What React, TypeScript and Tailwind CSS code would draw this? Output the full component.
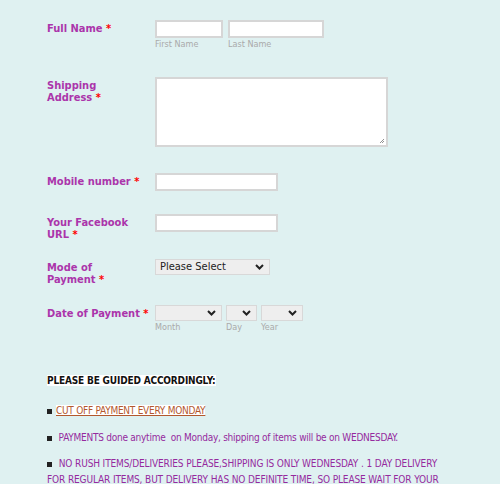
import React from "react";

const Label = ({ children }: { children: React.ReactNode }) => (
  <div className="w-[108px] shrink-0 text-[11px] font-bold leading-[12px] text-[#ab35ab]">{children}</div>
);
const Star = () => <span className="text-[#ff0000]"> *</span>;

const Chevron = () => (
  <svg width="9" height="6" viewBox="0 0 9 6" className="absolute right-[5px] top-1/2 -translate-y-1/2">
    <path d="M1 1 L4.5 4.5 L8 1" stroke="#222" strokeWidth="2" fill="none" />
  </svg>
);

const Sel = ({ w, text }: { w: string; text?: string }) => (
  <div className={`relative h-[16px] ${w} border border-[#d8d8d8] bg-[#eeeeee] pl-[4px] text-[11px] leading-[14px] text-[#222]`}>
    {text}
    <Chevron />
  </div>
);

const Sub = ({ children }: { children: React.ReactNode }) => (
  <div className="text-[9px] leading-[12px] text-[#aaaaaa]">{children}</div>
);

const Bullet = () => <span className="mr-[4px] inline-block h-[5px] w-[5px] bg-[#222] align-middle" />;

export default function App() {
  return (
    <div
      className="min-h-[484px] w-[500px] overflow-hidden bg-[#dff1f1] pl-[47px] pt-[20px]"
      style={{ fontFamily: '"DejaVu Sans Condensed", "DejaVu Sans", Verdana, sans-serif', fontStretch: "condensed" }}
    >
      {/* Full name */}
      <div className="flex">
        <Label><div className="pt-[3px]">Full Name<Star /></div></Label>
        <div className="flex gap-[5px]">
          <div>
            <div className="h-[18px] w-[68px] border-2 border-[#d6d6d6] bg-white" />
            <Sub>First Name</Sub>
          </div>
          <div>
            <div className="h-[18px] w-[96px] border-2 border-[#d6d6d6] bg-white" />
            <Sub>Last Name</Sub>
          </div>
        </div>
      </div>
      {/* Shipping */}
      <div className="mt-[27px] flex">
        <Label><div className="pt-[3px]">Shipping<br />Address<Star /></div></Label>
        <div className="relative h-[70px] w-[233px] border-2 border-[#d6d6d6] bg-white">
          <svg width="6" height="6" viewBox="0 0 6 6" className="absolute bottom-[1px] right-[1px]">
            <path d="M5 1 L1 5 M5 3 L3 5" stroke="#777" strokeWidth="0.8" />
          </svg>
        </div>
      </div>
      {/* Mobile */}
      <div className="mt-[26px] flex">
        <Label><div className="whitespace-nowrap pt-[3px]">Mobile number<Star /></div></Label>
        <div className="h-[18px] w-[123px] border-2 border-[#d6d6d6] bg-white" />
      </div>
      {/* Facebook */}
      <div className="mt-[23px] flex">
        <Label><div className="pt-[3px]">Your Facebook<br />URL<Star /></div></Label>
        <div className="h-[18px] w-[123px] border-2 border-[#d6d6d6] bg-white" />
      </div>
      {/* Mode of payment */}
      <div className="mt-[18px] flex">
        <Label><div className="pt-[3px]">Mode of<br />Payment<Star /></div></Label>
        <Sel w="w-[115px]" text="Please Select" />
      </div>
      {/* Date */}
      <div className="mt-[19px] flex">
        <Label><div className="whitespace-nowrap pt-[3px]">Date of Payment<Star /></div></Label>
        <div className="flex gap-[4px]">
          <div>
            <Sel w="w-[67px]" />
            <Sub>Month</Sub>
          </div>
          <div>
            <Sel w="w-[31px]" />
            <Sub>Day</Sub>
          </div>
          <div>
            <Sel w="w-[42px]" />
            <Sub>Year</Sub>
          </div>
        </div>
      </div>
      {/* Notes */}
      <div className="mt-[40px] w-[403px] text-[10px] leading-[15px] tracking-[-0.25px]">
        <div><span className="bg-white font-bold tracking-[-0.17px] text-[#111]">PLEASE BE GUIDED ACCORDINGLY:</span></div>
        <div className="mt-[15px] text-[#b3582e]">
          <Bullet />
          <span className="bg-white underline">CUT OFF PAYMENT EVERY MONDAY</span>
        </div>
        <div className="mt-[12px] text-[#952a9e]">
          <Bullet />&nbsp;PAYMENTS done anytime &nbsp;on Monday, shipping of items will be on WEDNESDAY.
        </div>
        <div className="mt-[11px] leading-[16px] tracking-[-0.12px] text-[#952a9e]">
          <Bullet />&nbsp;NO RUSH ITEMS/DELIVERIES PLEASE,SHIPPING IS ONLY WEDNESDAY . 1 DAY DELIVERY FOR REGULAR ITEMS, BUT DELIVERY HAS NO DEFINITE TIME, SO PLEASE WAIT FOR YOUR ITEMS.
        </div>
      </div>
    </div>
  );
}
